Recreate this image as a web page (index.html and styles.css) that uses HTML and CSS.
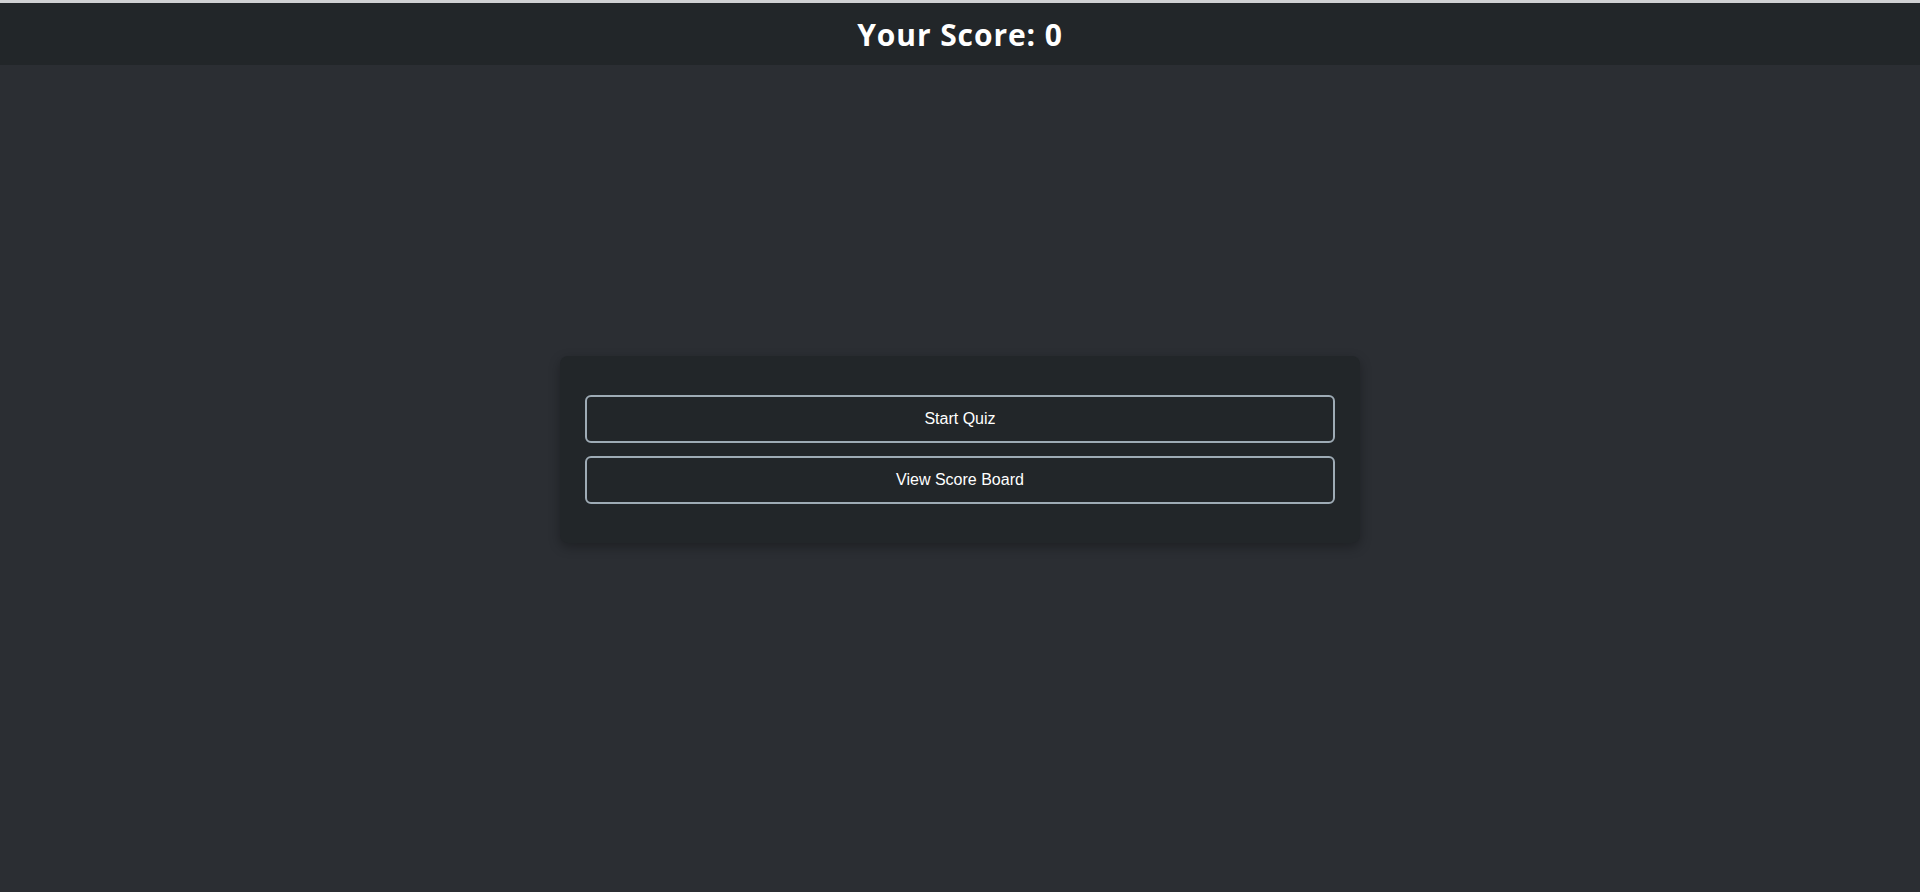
FILE: index.html
```html
<!DOCTYPE html>
<html lang="en">
<head>
    <meta charset="UTF-8">
    <meta name="viewport" content="width=device-width, initial-scale=1.0">
    <title>Quiz</title>
    <link rel="stylesheet" href="styles.css">
</head>
<body>

    <div class="header">
        <h1>Your Score: <span id="score">0</span></h1>
    </div>

    <div class="main">
        <div class="card">
            <button class="btn" id="startQuiz">Start Quiz</button>
            <button class="btn" id="viewScores">View Score Board</button>
        </div>
    </div>

</body>
</html>
```

FILE: styles.css
```css
html, body {
    height: 100%;
}

body {
    font-family: 'Liberation Sans', Arial, sans-serif;
    background-color: #2b2e33;
    margin: 0;
    padding: 0;
    display: flex;
    flex-direction: column;
}

.header {
    background-color: #222629;
    border-top: 3px solid #d0d1d3;
    height: 62px;
    display: flex;
    justify-content: center;
    align-items: center;
}

.header h1 {
    font-family: 'Open Sans', sans-serif;
    font-weight: 700;
    font-size: 30px;
    color: #fff;
    margin: 0;
    letter-spacing: 0.9px;
}

.main {
    flex: 1;
    display: flex;
    justify-content: center;
    align-items: center;
    padding-bottom: 58px;
}

.card {
    background-color: #222629;
    width: 800px;
    box-sizing: border-box;
    padding: 39px 25px;
    border-radius: 8px;
    box-shadow: 0 4px 12px rgba(0, 0, 0, 0.3);
    display: flex;
    flex-direction: column;
    gap: 13px;
}

.btn {
    height: 48px;
    background-color: #222629;
    color: #fff;
    border: 2px solid #9eabb5;
    border-radius: 6px;
    font-family: 'Liberation Sans', Arial, sans-serif;
    font-size: 16px;
    cursor: pointer;
}

.btn:hover {
    background-color: #2d3236;
}
```
